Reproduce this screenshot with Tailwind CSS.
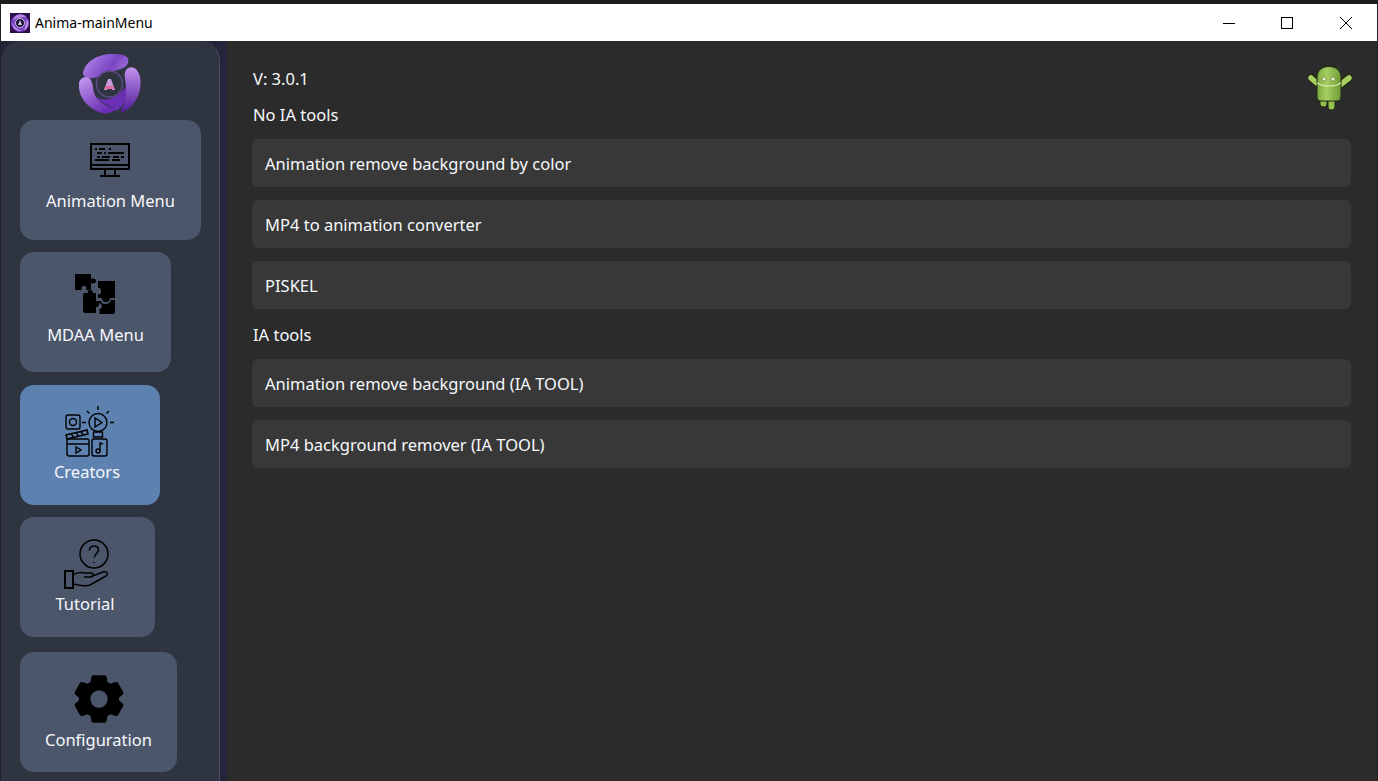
<!DOCTYPE html>
<html lang="en">
<head>
  <meta charset="UTF-8" />
  <title>Anima-mainMenu</title>
  <script src="https://cdn.jsdelivr.net/npm/@tailwindcss/browser@4"></script>
</head>
<body class="w-[1378px] h-[781px] overflow-hidden bg-[#1f2023] font-['Noto_Sans',sans-serif] text-[#f6f8fc]">
  <div class="h-[4px] bg-[#1c1d20]"></div>

  <!-- title bar -->
  <div class="flex items-center h-[37px] w-[1376px] ml-px bg-white text-black">
    <svg class="w-5 h-5 ml-[9px]" viewBox="0 0 20 20">
      <rect width="20" height="20" fill="#2a0f4a"/>
      <circle cx="10" cy="10" r="9" fill="#7a45c0"/>
      <path d="M3 7C5 1 13 0 16 4 13 4 8 4 3 7zM17 6c3 4 1 10-3 12 1-3 2-8 3-12zM2 10c0 4 4 9 9 8-3-2-7-4-9-8z" fill="#b88ae6"/>
      <circle cx="10" cy="10" r="4.500" fill="#1d1430" stroke="#cbb6e8"/>
      <path d="M8 12l2-5 2 5z" fill="#d9c6f0"/>
    </svg>
    <span class="ml-[5px] text-[14px]">Anima-mainMenu</span>
    <div class="ml-auto flex h-full mr-px">
      <div class="w-[59px] flex items-center justify-center">
        <svg class="w-3 h-3" viewBox="0 0 12 12"><path d="M0 6.500h12" stroke="#000" stroke-width="1"/></svg>
      </div>
      <div class="w-[58px] flex items-center justify-center">
        <svg class="w-3 h-3" viewBox="0 0 12 12"><rect x=".5" y=".5" width="11" height="11" fill="none" stroke="#000"/></svg>
      </div>
      <div class="w-[60px] flex items-center justify-center">
        <svg class="w-3 h-3" viewBox="0 0 12 12"><path d="M0 0l12 12M12 0L0 12" stroke="#000" stroke-width="1"/></svg>
      </div>
    </div>
  </div>

  <div class="flex h-[740px] w-[1376px] ml-px bg-[#24243a]">
    <!-- sidebar -->
    <aside class="w-[219px] h-[760px] shrink-0 pl-[19px] pt-[12px] bg-[#2e3440] rounded-[20px] border-r border-[#4a5060] text-[16.500px]">
      <div class="w-[180px] flex justify-center">
        <svg class="w-[64px] h-[62px]" viewBox="0 0 64 62">
          <defs>
            <linearGradient id="pa" x1="0" y1="0.300" x2="1" y2="0.700"><stop offset="0" stop-color="#b184e6"/><stop offset="0.600" stop-color="#7a45c4"/><stop offset="1" stop-color="#a578de"/></linearGradient>
            <linearGradient id="pb" x1="0" y1="0" x2="0.600" y2="1"><stop offset="0" stop-color="#c79cf0"/><stop offset="1" stop-color="#6a2eb5"/></linearGradient>
            <linearGradient id="pc" x1="0.500" y1="0" x2="0.500" y2="1"><stop offset="0" stop-color="#c292ee"/><stop offset="1" stop-color="#4f1a98"/></linearGradient>
          </defs>
          <path d="M5 21C6 8 22 0 36 1 47 1 52 4 50 10 48 16 38 17 30 20 22 23 8 30 5 21Z" fill="url(#pa)"/>
          <path d="M48 17C52 12 60 14 62 24 65 40 56 56 42 60 46 52 48 44 48 34 48 28 45 22 48 17Z" fill="url(#pc)"/>
          <path d="M18 44C28 50 40 44 48 34 48 46 46 54 38 58 34 52 24 52 18 44Z" fill="#6b2fb6"/>
          <path d="M1 31C1 25 8 22 12 26 16 30 14 38 18 44 22 50 30 54 38 56 32 61 28 61 24 60 10 56 0 44 1 31Z" fill="url(#pb)"/>
          <circle cx="31.500" cy="31" r="13" fill="#2e3440" stroke="#5d4a86" stroke-width="1.500"/>
          <path d="M26 37l4-11h3l4 11h-3l-1-3h-3l-1 3z" fill="#c79ad8"/>
          <path d="M27.500 33h8l1 3h-10z" fill="#e06aa8"/>
        </svg>
      </div>

      <div class="flex flex-col items-start mt-[5px]">
        <div class="w-[181px] h-[120px] rounded-[14px] bg-[#4c566a] flex flex-col items-center pt-[23px]">
          <svg class="w-[40px] h-[36px] -ml-px" viewBox="0 0 40 36">
            <rect x="1" y="1" width="38" height="25" fill="none" stroke="#000" stroke-width="2"/>
            <path d="M1 22h38M15 26v6M25 26v6M10 33h20" stroke="#000" stroke-width="2" fill="none"/>
            <path d="M5 6h2M9 6h6M19 6h2M7 10h5M14 10h2M18 10h16M7 14h3M12 14h8M23 14h6M31 14h3M5 17h14M22 17h8" stroke="#000" stroke-width="1.800"/>
          </svg>
          <span class="mt-[10px] leading-[24px]">Animation Menu</span>
        </div>

        <div class="w-[151px] h-[120px] mt-[12px] rounded-[14px] bg-[#4c566a] flex flex-col items-center pt-[22px]">
          <svg class="w-[40px] h-[40px] -ml-[1px]" viewBox="0 0 40 40">
            <path d="M0 0h16v5c3-1 5 0 5 2s-2 3-5 2v7h-5c1-3 0-4-2-4s-3 1-2 4H0z" fill="#000"/>
            <path d="M23 7H40V24H35c0 3-2 4-4 4s-4-1-4-4h-4v-4c2 1 3 0 3-3s-1-3-3-3z" fill="#000"/>
            <path d="M23 27h3c1 3 3 3 5 3s4-1 5-4h4v12a2 2 0 0 1-2 2H24c1-2 1-3 0-5 2 0 3-1 3-3s-2-3-4-3z" fill="#000"/>
            <path d="M8 21a2 2 0 0 1 2-2h3c-1-2 0-3 2-3s3 1 3 3h3v8c2 0 3 1 3 3s-1 3-3 3v6H10a2 2 0 0 1-2-2z" fill="#000"/>
          </svg>
          <span class="mt-[9px] leading-[24px]">MDAA Menu</span>
        </div>

        <div class="w-[140px] h-[120px] mt-[13px] rounded-[14px] bg-[#5d82b0] flex flex-col items-center pt-[21px]">
          <svg class="w-[50px] h-[52px]" viewBox="0 0 50 52" fill="none" stroke="#000" stroke-width="1.400">
            <rect x="1" y="9" width="14" height="14" rx="2"/>
            <circle cx="8" cy="16" r="3.500"/>
            <path d="M17 16.500h4M33 0v4M22 5l2.500 2.500M44 5l-2.500 2.500M45 16.500h4"/>
            <circle cx="33" cy="16.500" r="9"/>
            <path d="M30 12v9l7-4.500zM28.500 26h9v5h-9z"/>
            <path d="M1 29l21-5 1 4-21 5zM6 27l2 4M11 26l2 4M16 25l2 4" stroke-width="1.500"/>
            <rect x="2" y="33" width="22" height="17" rx="2"/>
            <path d="M2 38h22M11 41v6l5-3z"/>
            <rect x="27" y="33" width="15" height="17" rx="2"/>
            <circle cx="33" cy="45" r="2"/>
            <path d="M35 45v-8l3 1"/>
          </svg>
          <span class="mt-[3px] mr-[6px] leading-[22px]">Creators</span>
        </div>

        <div class="w-[135px] h-[120px] mt-[12px] rounded-[14px] bg-[#4c566a] flex flex-col items-center pt-[22px]">
          <svg class="w-[46px] h-[51px] -ml-[1px]" viewBox="0 0 46 51" fill="none" stroke="#000" stroke-width="1.500">
            <circle cx="30" cy="15" r="14"/>
            <path d="M25.500 11.500c0-6 9-6 9-.5 0 3-4 3.500-4 7.500M30 23v1"/>
            <rect x="1" y="32" width="8" height="17" stroke-width="2"/>
            <path d="M9 36c4-3 8-3 12-2h6c3 0 3 4 0 4h-7M26 38l13-5c4-1 6 2 3 4L26 46c-5 2-11 0-17-1"/>
          </svg>
          <span class="mt-[2px] mr-[5px] leading-[24px]">Tutorial</span>
        </div>

        <div class="w-[157px] h-[120px] mt-[15px] rounded-[14px] bg-[#4c566a] flex flex-col items-center pt-[21px]">
          <svg class="w-[52px] h-[52px]" viewBox="0 0 24 24">
            <path fill-rule="evenodd" d="M9.500 1h5a1 1 0 0 1 1 .800l.4 2.300 1.500.9 2.200-.8a1 1 0 0 1 1.200.4l2.300 4a1 1 0 0 1-.2 1.300L21.200 11.400v1.200l1.700 1.500a1 1 0 0 1 .2 1.300l-2.300 4a1 1 0 0 1-1.200.4l-2.200-.8-1.500.9-.4 2.300a1 1 0 0 1-1 .8h-5a1 1 0 0 1-1-.8l-.4-2.300-1.500-.9-2.200.8a1 1 0 0 1-1.200-.4l-2.300-4a1 1 0 0 1 .2-1.300l1.700-1.500v-1.200L1.100 9.900a1 1 0 0 1-.2-1.300l2.300-4a1 1 0 0 1 1.200-.4l2.200.8 1.500-.9.400-2.300a1 1 0 0 1 1-.8zM12 8a4 4 0 1 0 0 8 4 4 0 0 0 0-8z" fill="#000"/>
          </svg>
          <span class="mt-[3px] leading-[24px]">Configuration</span>
        </div>
      </div>
    </aside>

    <!-- main -->
    <main class="relative ml-[7px] flex-1 h-[740px] bg-[#2b2b2b] pl-[25px] pr-[25px] pt-[26px] text-[16.500px]">
      <svg class="absolute right-[25px] top-[25px] w-[44px] h-[44px]" viewBox="0 0 44 44">
        <defs>
          <linearGradient id="and" x1="0" y1="0" x2="1" y2="0"><stop offset="0" stop-color="#7fa83e"/><stop offset="0.400" stop-color="#a5cf62"/><stop offset="1" stop-color="#6f9a34"/></linearGradient>
        </defs>
        <path d="M14 1l4 5M31 1l-4 5" stroke="#2f4f18" stroke-width="1.500"/>
        <path d="M3 12l8 7" stroke="#1f2a14" stroke-width="8" stroke-linecap="round"/>
        <path d="M41 12l-9 7" stroke="#1f2a14" stroke-width="8" stroke-linecap="round"/>
        <path d="M3 12l8 7" stroke="#a6cf5f" stroke-width="5.500" stroke-linecap="round"/>
        <path d="M41 12l-9 7" stroke="#a6cf5f" stroke-width="5.500" stroke-linecap="round"/>
        <rect x="12" y="32" width="7" height="9" rx="3" fill="#94c04e" stroke="#1f2a14"/>
        <rect x="20" y="32" width="7" height="12" rx="3" fill="#94c04e" stroke="#1f2a14"/>
        <path d="M9 11c0-14 24-14 24 0v20c0 3-2 4-4 4H13c-2 0-4-1-4-4z" fill="url(#and)" stroke="#1f2a14"/>
        <path d="M9 17c6 4 18 4 24 0" stroke="#d8ebb4" stroke-width="1.200" fill="none"/>
        <circle cx="16" cy="13" r="2" fill="#e8f0d8" stroke="#5a7a30" stroke-width="0.600"/>
        <circle cx="25" cy="13" r="2" fill="#e8f0d8" stroke="#5a7a30" stroke-width="0.600"/>
      </svg>

      <p class="ml-px leading-[24px]">V: 3.0.1</p>
      <p class="ml-px mt-[12px] leading-[24px]">No IA tools</p>

      <div class="flex flex-col gap-[13px] mt-[12px] w-[1099px]">
        <div class="h-[48px] rounded-[6px] bg-[#383838] flex items-center px-[13px] pt-[2px]">Animation remove background by color</div>
        <div class="h-[48px] rounded-[6px] bg-[#383838] flex items-center px-[13px] pt-[2px]">MP4 to animation converter</div>
        <div class="h-[48px] rounded-[6px] bg-[#383838] flex items-center px-[13px] pt-[2px]">PISKEL</div>
      </div>

      <p class="ml-px mt-[14px] leading-[24px]">IA tools</p>

      <div class="flex flex-col gap-[13px] mt-[12px] w-[1099px]">
        <div class="h-[48px] rounded-[6px] bg-[#383838] flex items-center px-[13px] pt-[2px]">Animation remove background (IA TOOL)</div>
        <div class="h-[48px] rounded-[6px] bg-[#383838] flex items-center px-[13px] pt-[2px]">MP4 background remover (IA TOOL)</div>
      </div>
    </main>
  </div>
</body>
</html>
